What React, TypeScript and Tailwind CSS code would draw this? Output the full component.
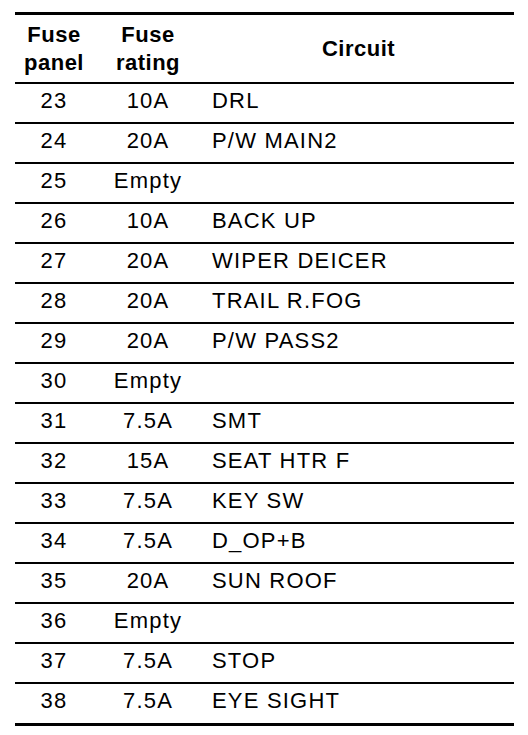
import * as React from "react";

type Row = { panel: string; rating: string; circuit: string };

const rows: Row[] = [
  { panel: "23", rating: "10A", circuit: "DRL" },
  { panel: "24", rating: "20A", circuit: "P/W MAIN2" },
  { panel: "25", rating: "Empty", circuit: "" },
  { panel: "26", rating: "10A", circuit: "BACK UP" },
  { panel: "27", rating: "20A", circuit: "WIPER DEICER" },
  { panel: "28", rating: "20A", circuit: "TRAIL R.FOG" },
  { panel: "29", rating: "20A", circuit: "P/W PASS2" },
  { panel: "30", rating: "Empty", circuit: "" },
  { panel: "31", rating: "7.5A", circuit: "SMT" },
  { panel: "32", rating: "15A", circuit: "SEAT HTR F" },
  { panel: "33", rating: "7.5A", circuit: "KEY SW" },
  { panel: "34", rating: "7.5A", circuit: "D_OP+B" },
  { panel: "35", rating: "20A", circuit: "SUN ROOF" },
  { panel: "36", rating: "Empty", circuit: "" },
  { panel: "37", rating: "7.5A", circuit: "STOP" },
  { panel: "38", rating: "7.5A", circuit: "EYE SIGHT" },
];

const cols = "grid grid-cols-[78px_110px_1fr]";

export default function App() {
  return (
    <main className="min-h-[735px] w-[528px] bg-white pl-[15px] pt-[12px] font-['Liberation_Sans',Arial,sans-serif] text-black">
      <div className="w-[499px]">
        {/* header */}
        <div
          className={`${cols} h-[72px] items-center border-t-[3px] border-b-2 border-black text-[22px] font-bold leading-[28px] tracking-[0.5px]`}
        >
          <div className="text-center">
            Fuse
            <br />
            panel
          </div>
          <div className="text-center">
            Fuse
            <br />
            rating
          </div>
          <div className="text-center">Circuit</div>
        </div>

        {rows.map((row, i) => {
          const last = i === rows.length - 1;
          return (
            <div
              key={row.panel}
              className={`${cols} items-center border-black pb-[5px] text-[22px] leading-none tracking-[1.2px] ${
                last ? "h-[42px] border-b-[3px]" : "h-[40px] border-b-2"
              }`}
            >
              <div className="text-center">{row.panel}</div>
              <div className="text-center">{row.rating}</div>
              <div className="pl-[9px]">{row.circuit}</div>
            </div>
          );
        })}
      </div>
    </main>
  );
}
